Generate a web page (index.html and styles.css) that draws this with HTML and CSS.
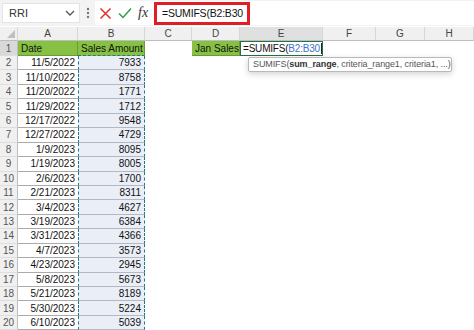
FILE: index.html
```html
<!DOCTYPE html>
<html lang="en">
<head>
    <meta charset="UTF-8">
    <meta name="viewport" content="width=device-width, initial-scale=1.0">
    <title>SUMIFS - Jan Sales</title>
    <link rel="stylesheet" href="styles.css">
</head>
<body>
    <div class="formula-bar">
        <div class="name-box">
            <span>RRI</span>
            <svg class="chevron" width="10" height="6" viewBox="0 0 10 6"><polyline points="1,1 5,5 9,1" fill="none" stroke="#555" stroke-width="1.3"/></svg>
        </div>
        <svg class="dots" width="4" height="14" viewBox="0 0 4 14"><circle cx="2" cy="3" r="1.2" fill="#777"/><circle cx="2" cy="7" r="1.2" fill="#777"/><circle cx="2" cy="11" r="1.2" fill="#777"/></svg>
        <div class="formula-area">
            <div class="tools">
                <svg class="cancel" width="13" height="13" viewBox="0 0 13 13"><path d="M1.5 1.5 L11.5 11.5 M11.5 1.5 L1.5 11.5" stroke="#e0302a" stroke-width="1.5" fill="none"/></svg>
                <svg class="enter" width="14" height="12" viewBox="0 0 14 12"><polyline points="1,6.5 5,10.5 13,1.5" fill="none" stroke="#2f9e44" stroke-width="1.5"/></svg>
                <span class="fx">fx</span>
            </div>
            <div class="formula-input">=SUMIFS(B2:B30</div>
        </div>
    </div>

    <div class="sheet-wrap">
        <table class="sheet">
            <colgroup>
                <col class="c-rh"><col class="c-a"><col class="c-b"><col class="c-c"><col class="c-d">
                <col class="c-e"><col class="c-f"><col class="c-g"><col class="c-h">
            </colgroup>
            <tr class="head">
                <th class="corner"><svg width="8" height="8" viewBox="0 0 8 8"><polygon points="8,0 8,8 0,8" fill="#bfbfbf"/></svg></th>
                <th>A</th><th>B</th><th>C</th><th>D</th><th class="active">E</th><th>F</th><th>G</th><th>H</th>
            </tr>
            <tr>
                <th class="rh active">1</th>
                <td class="green">Date</td>
                <td class="green green-b">Sales Amount</td>
                <td></td>
                <td class="green">Jan Sales</td>
                <td class="editing">=SUMIFS(<span class="ref">B2:B30</span><span class="caret"></span></td>
                <td></td><td></td><td></td>
            </tr>
            <tr><th class="rh">2</th><td class="date">11/5/2022</td><td class="amt">7933</td><td></td><td></td><td></td><td></td><td></td><td></td></tr>
            <tr><th class="rh">3</th><td class="date">11/10/2022</td><td class="amt">8758</td><td></td><td></td><td></td><td></td><td></td><td></td></tr>
            <tr><th class="rh">4</th><td class="date">11/20/2022</td><td class="amt">1771</td><td></td><td></td><td></td><td></td><td></td><td></td></tr>
            <tr><th class="rh">5</th><td class="date">11/29/2022</td><td class="amt">1712</td><td></td><td></td><td></td><td></td><td></td><td></td></tr>
            <tr><th class="rh">6</th><td class="date">12/17/2022</td><td class="amt">9548</td><td></td><td></td><td></td><td></td><td></td><td></td></tr>
            <tr><th class="rh">7</th><td class="date">12/27/2022</td><td class="amt">4729</td><td></td><td></td><td></td><td></td><td></td><td></td></tr>
            <tr><th class="rh">8</th><td class="date">1/9/2023</td><td class="amt">8095</td><td></td><td></td><td></td><td></td><td></td><td></td></tr>
            <tr><th class="rh">9</th><td class="date">1/19/2023</td><td class="amt">8005</td><td></td><td></td><td></td><td></td><td></td><td></td></tr>
            <tr><th class="rh">10</th><td class="date">2/6/2023</td><td class="amt">1700</td><td></td><td></td><td></td><td></td><td></td><td></td></tr>
            <tr><th class="rh">11</th><td class="date">2/21/2023</td><td class="amt">8311</td><td></td><td></td><td></td><td></td><td></td><td></td></tr>
            <tr><th class="rh">12</th><td class="date">3/4/2023</td><td class="amt">4627</td><td></td><td></td><td></td><td></td><td></td><td></td></tr>
            <tr><th class="rh">13</th><td class="date">3/19/2023</td><td class="amt">6384</td><td></td><td></td><td></td><td></td><td></td><td></td></tr>
            <tr><th class="rh">14</th><td class="date">3/31/2023</td><td class="amt">4366</td><td></td><td></td><td></td><td></td><td></td><td></td></tr>
            <tr><th class="rh">15</th><td class="date">4/7/2023</td><td class="amt">3573</td><td></td><td></td><td></td><td></td><td></td><td></td></tr>
            <tr><th class="rh">16</th><td class="date">4/23/2023</td><td class="amt">2945</td><td></td><td></td><td></td><td></td><td></td><td></td></tr>
            <tr><th class="rh">17</th><td class="date">5/8/2023</td><td class="amt">5673</td><td></td><td></td><td></td><td></td><td></td><td></td></tr>
            <tr><th class="rh">18</th><td class="date">5/21/2023</td><td class="amt">8189</td><td></td><td></td><td></td><td></td><td></td><td></td></tr>
            <tr><th class="rh">19</th><td class="date">5/30/2023</td><td class="amt">5224</td><td></td><td></td><td></td><td></td><td></td><td></td></tr>
            <tr><th class="rh">20</th><td class="date">6/10/2023</td><td class="amt">5039</td><td></td><td></td><td></td><td></td><td></td><td></td></tr>
        </table>

        <div class="tooltip">SUMIFS(<b>sum_range</b>, criteria_range1, criteria1, ...)</div>
    </div>
</body>
</html>
```

FILE: styles.css
```css
body {
    margin: 0;
    background: #fff;
    font-family: "Liberation Sans", Arial, sans-serif;
    color: #111;
    overflow: hidden;
}

.formula-bar {
    height: 26px;
    background: #f3f3f3;
    display: flex;
    align-items: center;
}

.name-box {
    margin-left: 2px;
    width: 78px;
    height: 20px;
    box-sizing: border-box;
    background: #fff;
    border: 1px solid #e4e4e4;
    display: flex;
    align-items: center;
    justify-content: space-between;
    padding: 0 4px 0 6px;
    font-size: 11px;
    color: #333;
}

.dots {
    margin: 0 5px 0 6px;
}

.formula-area {
    flex: 1;
    height: 24px;
    background: #fff;
    display: flex;
    align-items: center;
}

.tools {
    width: 59px;
    display: flex;
    align-items: center;
    padding-left: 4px;
    box-sizing: border-box;
}

.cancel {
    margin-right: 6px;
}

.enter {
    margin-right: 6px;
}

.fx {
    font-family: "Liberation Serif", serif;
    font-style: italic;
    font-size: 14px;
    color: #333;
}

.formula-input {
    width: 96px;
    height: 23px;
    box-sizing: border-box;
    border: 3px solid #e21d23;
    padding-left: 5px;
    font-size: 10.5px;
    line-height: 17px;
    letter-spacing: -0.2px;
    color: #111;
    white-space: nowrap;
}

.sheet-wrap {
    position: relative;
    margin-top: 1px;
}

.sheet {
    table-layout: fixed;
    border-collapse: separate;
    border-spacing: 0;
    width: 474px;
    font-size: 10px;
}

.c-rh { width: 18px; }
.c-a { width: 60px; }
.c-b { width: 67px; }
.c-c { width: 47px; }
.c-d { width: 48px; }
.c-e { width: 83px; }
.c-f { width: 53px; }
.c-g { width: 49px; }
.c-h { width: 49px; }

.sheet tr {
    height: 14.45px;
}

.sheet tr.head {
    height: 14px;
}

.sheet th, .sheet td {
    padding: 0 3px;
    white-space: nowrap;
    overflow: hidden;
    line-height: 13px;
    box-sizing: border-box;
}

.head th {
    background: #f0f0f0;
    color: #444;
    font-weight: normal;
    font-size: 10px;
    border-right: 1px solid #d6d6d6;
    border-bottom: 1px solid #bdbdbd;
}

.head th.corner {
    padding: 0;
    text-align: right;
    vertical-align: bottom;
    line-height: 0;
}

.corner svg {
    margin: 0 2px 2px 0;
}

.head th.active {
    background: #e0e0e0;
}

.rh {
    background: #f0f0f0;
    color: #555;
    font-weight: normal;
    font-size: 10px;
    text-align: center;
    border-right: 1px solid #bdbdbd;
    border-bottom: 1px solid #dedede;
}

.sheet th.rh {
    padding: 0;
}

.rh.active {
    background: #d9d9d9;
}

.green {
    background: #86c144;
    border-right: 1px solid #6a9a38;
    border-bottom: 1px solid #6a9a38;
}

.green-b {
    border-bottom: 1px dashed #2a7680;
}

.sheet td.editing {
    border: 1.5px solid #217346;
    padding: 0 2px;
    letter-spacing: -0.2px;
}

.ref {
    color: #4472c4;
}

.caret {
    display: inline-block;
    width: 1px;
    height: 11px;
    margin-left: 1px;
    background: #222;
    vertical-align: -2px;
}

.date {
    text-align: right;
    border-bottom: 1px solid #ababab;
}

.amt {
    text-align: right;
    background: #e9eef7;
    border-left: 1px dashed #2a7680;
    border-right: 1px dashed #2a7680;
    border-bottom: 1px solid #b4b8c0;
}

.tooltip {
    position: absolute;
    left: 248px;
    top: 30px;
    width: 204px;
    height: 15px;
    box-sizing: border-box;
    background: #fff;
    border: 1px solid #b9b9b9;
    border-radius: 2px;
    box-shadow: 0 2px 6px rgba(0, 0, 0, 0.18);
    padding-left: 4px;
    font-size: 9px;
    line-height: 13px;
    letter-spacing: -0.1px;
    color: #555;
    white-space: nowrap;
}

.tooltip b {
    color: #333;
}
```
